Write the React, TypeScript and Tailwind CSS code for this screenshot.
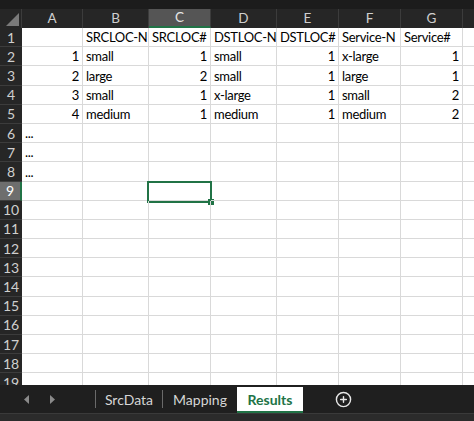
import { CirclePlus } from "lucide-react";

const cols = [
  { key: "A", w: "w-[61px]" },
  { key: "B", w: "w-[66px]" },
  { key: "C", w: "w-[62px]" },
  { key: "D", w: "w-[66px]" },
  { key: "E", w: "w-[62px]" },
  { key: "F", w: "w-[62px]" },
  { key: "G", w: "w-[62px]" },
];

type Cell = { v: string; num?: boolean };

const data: Cell[][] = [
  [{ v: "" }, { v: "SRCLOC-N" }, { v: "SRCLOC#" }, { v: "DSTLOC-N" }, { v: "DSTLOC#" }, { v: "Service-N" }, { v: "Service#" }],
  [{ v: "1", num: true }, { v: "small" }, { v: "1", num: true }, { v: "small" }, { v: "1", num: true }, { v: "x-large" }, { v: "1", num: true }],
  [{ v: "2", num: true }, { v: "large" }, { v: "2", num: true }, { v: "small" }, { v: "1", num: true }, { v: "large" }, { v: "1", num: true }],
  [{ v: "3", num: true }, { v: "small" }, { v: "1", num: true }, { v: "x-large" }, { v: "1", num: true }, { v: "small" }, { v: "2", num: true }],
  [{ v: "4", num: true }, { v: "medium" }, { v: "1", num: true }, { v: "medium" }, { v: "1", num: true }, { v: "medium" }, { v: "2", num: true }],
  [{ v: "..." }],
  [{ v: "..." }],
  [{ v: "..." }],
];

const font = { fontFamily: "Lato, 'Open Sans', sans-serif" };

export default function App() {
  const rows = Array.from({ length: 19 }, (_, i) => i + 1);

  return (
    <div className="flex h-[421px] w-[474px] flex-col overflow-hidden bg-white text-black" style={font}>
      <div className="h-[9px] shrink-0 bg-[#1c1c1c]" />

      {/* column headers */}
      <div className="flex h-[19px] shrink-0 bg-[#262626] text-[13.5px] text-[#cfcfcf]">
        <div className="relative w-[22px] shrink-0 border-r border-[#3c3c3c]">
          <div className="absolute bottom-[2px] right-[2px] h-0 w-0 border-b-[13px] border-l-[13px] border-b-[#7a7a7a] border-l-transparent" />
        </div>
        {cols.map((c) => (
          <div
            key={c.key}
            className={`${c.w} flex shrink-0 items-center justify-center border-r border-[#3c3c3c] ${
              c.key === "C" ? "border-b-2 border-b-[#217346] bg-[#555555] text-[#e6e6e6]" : ""
            }`}
          >
            {c.key}
          </div>
        ))}
        <div className="flex-1" />
      </div>

      {/* grid */}
      <div className="h-[357px] shrink-0 overflow-hidden">
        {rows.map((r) => {
          const rowData = data[r - 1] || [];
          const sel = r === 9;
          return (
            <div key={r} className="flex h-[19.2px]">
              <div
                className={`flex w-[22px] shrink-0 items-center justify-center border-b border-[#3c3c3c] text-[14px] ${
                  sel ? "border-r-2 border-r-[#217346] bg-[#6e6e6e] text-white" : "bg-[#262626] text-[#cfcfcf]"
                }`}
              >
                {r}
              </div>
              {cols.map((c, ci) => {
                const cell = rowData[ci];
                return (
                  <div
                    key={c.key}
                    className={`${c.w} relative flex shrink-0 items-end overflow-visible whitespace-nowrap border-b border-r border-[#d9d9d9] pb-[1px] text-[13px] leading-[16px] tracking-[-0.3px] ${
                      cell?.num ? "justify-end pr-[3px]" : "pl-[3px]"
                    }`}
                  >
                    {cell?.v}
                    {sel && c.key === "C" && (
                      <div className="absolute -left-[2px] -top-[1px] h-[22px] w-[65px] border-2 border-[#217346]">
                        <div className="absolute -bottom-[4px] -right-[4px] h-[6px] w-[6px] bg-[#217346]" />
                      </div>
                    )}
                  </div>
                );
              })}
              <div className="flex-1 border-b border-[#d9d9d9]" />
            </div>
          );
        })}
      </div>

      {/* sheet tabs */}
      <div className="flex h-[28px] shrink-0 items-stretch bg-[#1f1f1f] text-[14px] text-[#d6d6d6]">
        <div className="flex w-[95px] items-center gap-[19px] pl-[24px]">
          <svg width="6" height="9" viewBox="0 0 6 9">
            <path d="M5 0 L0 4.5 L5 9 Z" fill="#8a8a8a" />
          </svg>
          <svg width="6" height="9" viewBox="0 0 6 9">
            <path d="M1 0 L6 4.5 L1 9 Z" fill="#8a8a8a" />
          </svg>
        </div>
        <div className="my-[5px] w-px bg-[#6a6a6a]" />
        <div className="flex w-[66px] items-center justify-center">SrcData</div>
        <div className="my-[5px] w-px bg-[#6a6a6a]" />
        <div className="flex w-[74px] items-center justify-center">Mapping</div>
        <div className="mt-[2px] flex w-[66px] items-center justify-center border-b-2 border-[#217346] bg-white font-bold text-[#217346]">
          Results
        </div>
        <div className="flex w-[80px] items-center justify-center">
          <CirclePlus size={17} strokeWidth={2} color="#e8e8e8" />
        </div>
        <div className="flex-1" />
      </div>
      <div className="flex-1 border-t border-[#3a3a3a] bg-[#2b2b2b]" />
    </div>
  );
}
